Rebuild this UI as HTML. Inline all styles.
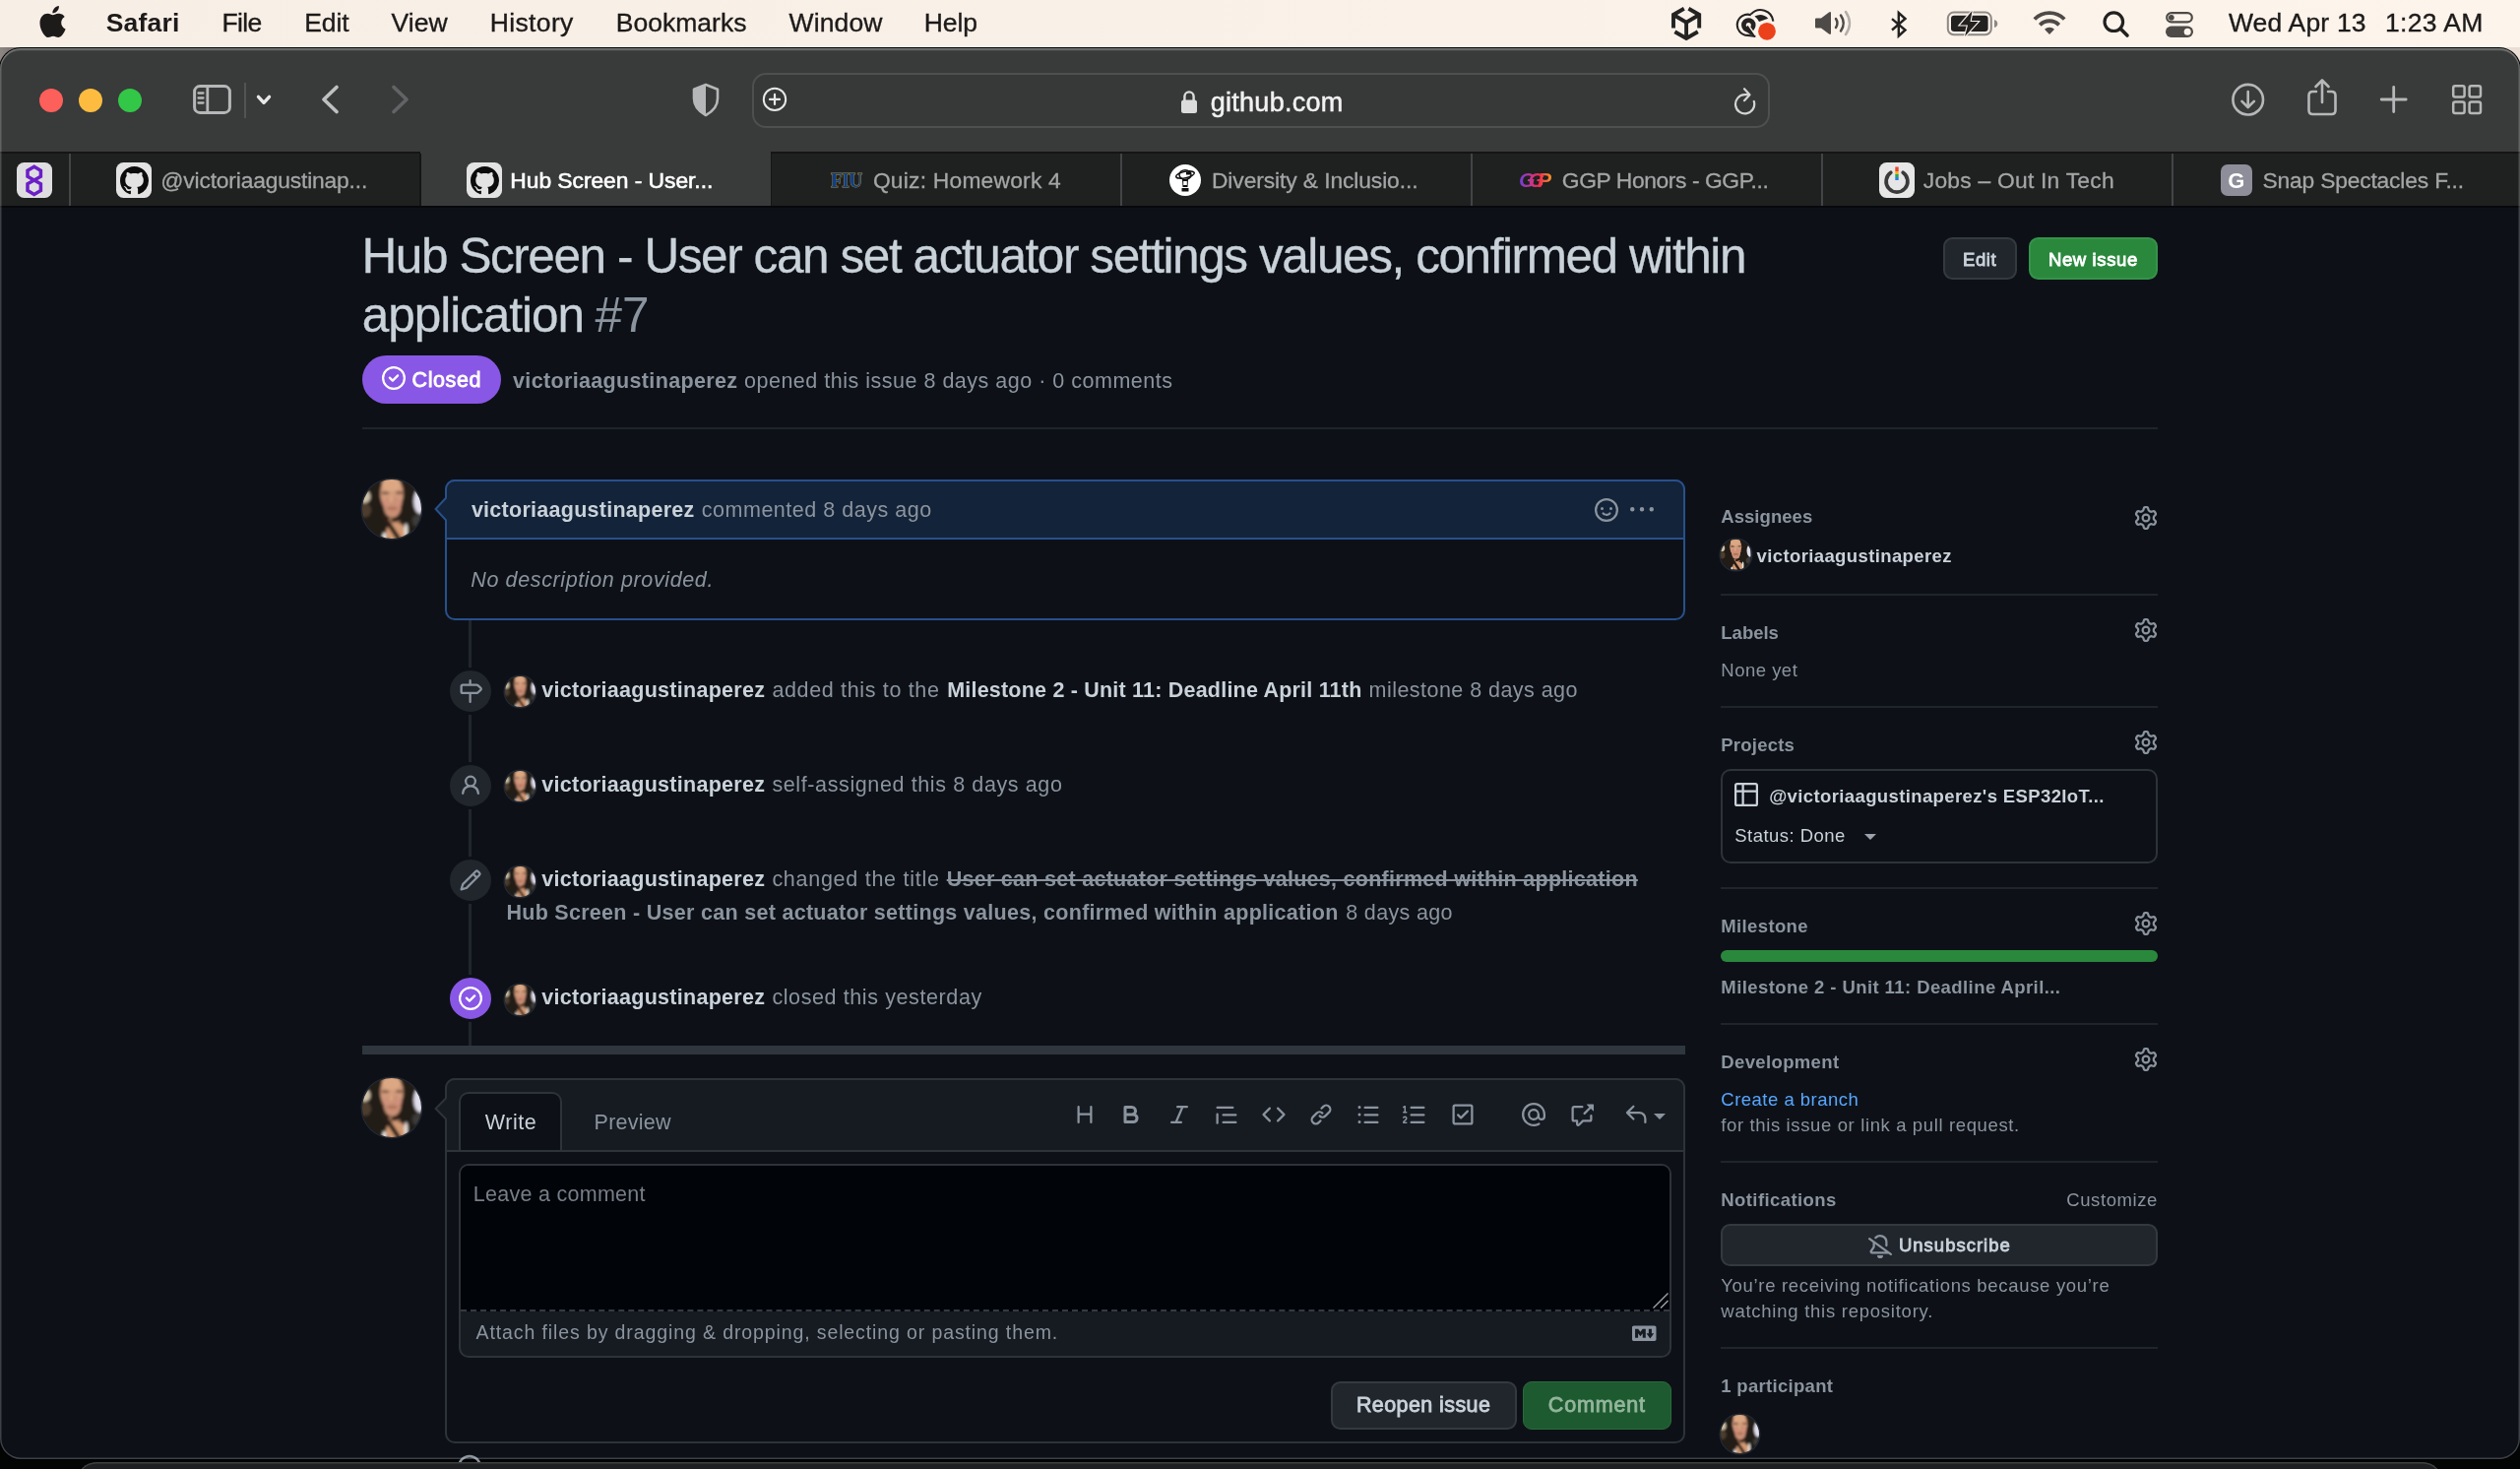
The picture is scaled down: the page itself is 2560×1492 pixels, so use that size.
<!DOCTYPE html>
<html lang="en"><head><meta charset="utf-8"><title>Hub Screen - User can set actuator settings values, confirmed within application #7</title>
<style>
html,body{margin:0;padding:0;background:#0d1117;}
body{width:2560px;height:1492px;overflow:hidden;font-family:"Liberation Sans",sans-serif;}
#root{will-change:transform;position:relative;width:2560px;height:1492px;overflow:hidden;background:#030404;}
.a{position:absolute;box-sizing:border-box;}
.t{position:absolute;white-space:pre;line-height:1;}
svg{position:absolute;overflow:visible;}

</style></head>
<body>
<div id="root">
<div class="a" style="left:0px;top:0px;width:2560px;height:48px;background:linear-gradient(90deg,#f7eee6 0%,#f9f0e8 45%,#fdf4ec 100%);"></div>
<div class="a" style="left:0px;top:48px;width:2560px;height:40px;background:linear-gradient(90deg,#8d8783 0px,#3a3a3a 60px,#3a3a3a 50%,#eaded5 50%);"></div>
<svg style="left:40px;top:6px" width="27" height="32" viewBox="0 0 814 1000"><path fill="#1d1b1a" d="M788.1 340.9c-5.800 4.500-108.200 62.200-108.200 190.500 0 148.400 130.300 200.900 134.200 202.200-.600 3.200-20.700 71.900-68.700 141.900-42.800 61.600-87.500 123.100-155.500 123.100s-85.500-39.500-164-39.500c-76.500 0-103.700 40.800-165.900 40.800s-105.600-57-155.500-127C46.700 790.700 0 663 0 541.800c0-194.400 126.400-297.500 250.800-297.500 66.100 0 121.200 43.400 162.700 43.400 39.500 0 101.100-46 176.300-46 28.500 0 130.900 2.600 198.300 99.200zm-234-181.500c31.100-36.900 53.100-88.100 53.100-139.300 0-7.100-.600-14.300-1.900-20.100-50.600 1.900-110.800 33.700-147.100 75.800-28.500 32.400-55.100 83.600-55.100 135.500 0 7.800 1.300 15.600 1.900 18.100 3.200.600 8.400 1.300 13.600 1.300 45.400 0 102.500-30.400 135.500-71.300z"/></svg>
<span class="t" style="left:107.7px;top:10.00px;font-size:26.5px;color:#1d1b1a;font-weight:700;letter-spacing:0.229px;">Safari</span>
<span class="t" style="left:225.5px;top:10.00px;font-size:26.5px;color:#1d1b1a;letter-spacing:-0.668px;-webkit-text-stroke:0.350px #1d1b1a;">File</span>
<span class="t" style="left:309.3px;top:10.00px;font-size:26.5px;color:#1d1b1a;letter-spacing:-0.157px;-webkit-text-stroke:0.350px #1d1b1a;">Edit</span>
<span class="t" style="left:397.5px;top:10.00px;font-size:26.5px;color:#1d1b1a;letter-spacing:0.044px;-webkit-text-stroke:0.350px #1d1b1a;">View</span>
<span class="t" style="left:497.8px;top:10.00px;font-size:26.5px;color:#1d1b1a;letter-spacing:0.341px;-webkit-text-stroke:0.350px #1d1b1a;">History</span>
<span class="t" style="left:625.8px;top:10.00px;font-size:26.5px;color:#1d1b1a;letter-spacing:0.019px;-webkit-text-stroke:0.350px #1d1b1a;">Bookmarks</span>
<span class="t" style="left:801.5px;top:10.00px;font-size:26.5px;color:#1d1b1a;letter-spacing:0.147px;-webkit-text-stroke:0.350px #1d1b1a;">Window</span>
<span class="t" style="left:938.7px;top:10.00px;font-size:26.5px;color:#1d1b1a;letter-spacing:-0.072px;-webkit-text-stroke:0.350px #1d1b1a;">Help</span>
<span class="t" style="left:2263.9px;top:10.00px;font-size:26.5px;color:#1d1b1a;letter-spacing:0.189px;-webkit-text-stroke:0.350px #1d1b1a;">Wed Apr 13</span>
<span class="t" style="left:2422.9px;top:10.00px;font-size:26.5px;color:#1d1b1a;letter-spacing:0.378px;-webkit-text-stroke:0.350px #1d1b1a;">1:23 AM</span>
<svg style="left:1697px;top:6px" width="33" height="37" viewBox="0 0 33 37">
<g fill="none" stroke="#242322" stroke-width="3.900" stroke-linejoin="miter" stroke-linecap="butt">
<path d="M13.800 2.800 L3 8.950 L3 22.600"/>
<path d="M18.400 2.800 L29.200 8.950 L29.200 22.600"/>
<path d="M4.400 26.200 L16.100 33 L27.800 26.200"/>
<path d="M3 8.950 L16.100 16.700 L29.200 8.950"/>
<path d="M16.100 16.700 L16.100 33"/>
</g></svg>
<svg style="left:1762px;top:7px" width="44" height="36" viewBox="0 0 44 36">
<g fill="none" stroke="#242322" stroke-width="2.100" stroke-linecap="butt" stroke-linejoin="round">
<path d="M16.900 8.300 A10.600 10.600 0 1 0 13.300 28.900 L21.200 29.900"/>
<path d="M16.850 7.360 A13 13 0 0 1 39.360 14.610"/>
</g>
<circle cx="14.300" cy="18.500" r="4.900" fill="none" stroke="#242322" stroke-width="4.700"/>
<path d="M9 22.800 L14.500 18.300 L21.800 30.500 L15.500 27.800 Z" fill="#242322"/>
<path d="M21.300 21.800 L25 19.500 L25 28 L22 28 Z" fill="#fcf3eb"/>
<path d="M13.600 17.600 L21.200 28.600" stroke="#fcf3eb" stroke-width="1.400" fill="none"/>
<path d="M20.400 9.600 Q28 5.600 34.300 11.800 L25 14.900 Q23 11.500 20.400 9.600 Z" fill="#242322"/>
<circle cx="33" cy="24.800" r="8.900" fill="#ec421b"/></svg>
<svg style="left:1843px;top:11px" width="40" height="26" viewBox="0 0 40 26">
<path d="M1 8.500 Q1 7.500 2 7.500 H7 L15 1.500 Q17 0.300 17 2.500 V22.500 Q17 24.700 15 23.500 L7 17.500 H2 Q1 17.500 1 16.500 Z" fill="#4d4a47"/>
<g fill="none" stroke-linecap="round" stroke-width="2.500">
<path d="M22 8 Q25 12.500 22 17" stroke="#4d4a47"/>
<path d="M27 4.500 Q32.500 12.500 27 20.500" stroke="#4d4a47"/>
<path d="M32 1 Q40 12.500 32 24" stroke="#b3aeaa"/>
</g></svg>
<svg style="left:1919px;top:11px" width="20" height="28" viewBox="0 0 20 28">
<path d="M3 8.200 L16.500 19.500 L9.800 25.500 V2 L16.500 8 L3 19.500" fill="none" stroke="#222120" stroke-width="2.400" stroke-linejoin="miter"/></svg>
<svg style="left:1977px;top:11px" width="54" height="26" viewBox="0 0 54 26">
<rect x="1.800" y="1.600" width="44" height="22.600" rx="6" fill="none" stroke="#8d8884" stroke-width="2"/>
<rect x="5" y="4.800" width="37.600" height="16.200" rx="3.200" fill="#222120"/>
<path d="M49 9 Q52.300 10 52.300 13 Q52.300 16 49 17 Z" fill="#8d8884"/>
<path d="M26.500 0 L14 14.500 H22 L19 26 L32.500 11 H24.500 Z" fill="#222120" stroke="#fcf3eb" stroke-width="2.200" paint-order="stroke"/></svg>
<svg style="left:2064px;top:9px" width="36" height="28" viewBox="0 0 36 28">
<g fill="none" stroke="#4d4a47" stroke-width="3.800" stroke-linecap="butt">
<path d="M2.800 10.500 A21.500 21.500 0 0 1 33.200 10.500"/>
<path d="M8.300 16.300 A13.700 13.700 0 0 1 27.700 16.300"/>
</g>
<path d="M18 26 L13 20.800 A7 7 0 0 1 23 20.800 Z" fill="#4d4a47"/></svg>
<svg style="left:2135px;top:10px" width="30" height="30" viewBox="0 0 30 30">
<circle cx="12.300" cy="12.200" r="9.300" fill="none" stroke="#222120" stroke-width="3.200"/>
<path d="M19 19 L26 26" stroke="#222120" stroke-width="3.600" stroke-linecap="round"/></svg>
<svg style="left:2199px;top:11px" width="30" height="28" viewBox="0 0 30 28">
<rect x="2.200" y="2.200" width="25.600" height="9.200" rx="4.600" fill="none" stroke="#4d4a47" stroke-width="2.200"/>
<circle cx="6.800" cy="6.800" r="2.900" fill="#4d4a47"/>
<rect x="1" y="15.500" width="28" height="11.400" rx="5.700" fill="#4d4a47"/>
<circle cx="23.200" cy="21.200" r="3.500" fill="#fcf3eb"/></svg>
<div class="a" style="left:0px;top:49px;width:2560px;height:1432.5px;background:#0d1117;border-radius:21px;box-shadow:0 0 0 1px #000;"></div>
<div class="a" style="left:0px;top:49px;width:2560px;height:106px;background:#393a3a;border-radius:21px 21px 0 0;"></div>
<div class="a" style="left:0px;top:154px;width:2560px;height:56px;background:#1f2020;border-top:2px solid #151516;border-bottom:1px solid #0a0a0b;"></div>
<div class="a" style="left:427px;top:154px;width:356px;height:56px;background:#393a3a;"></div>
<div class="a" style="left:70px;top:156px;width:2px;height:53px;background:#434445;"></div>
<div class="a" style="left:1138px;top:156px;width:2px;height:53px;background:#434445;"></div>
<div class="a" style="left:1494px;top:156px;width:2px;height:53px;background:#434445;"></div>
<div class="a" style="left:1850px;top:156px;width:2px;height:53px;background:#434445;"></div>
<div class="a" style="left:2206px;top:156px;width:2px;height:53px;background:#434445;"></div>
<div class="a" style="left:426px;top:156px;width:1.5px;height:53px;background:#151516;"></div>
<div class="a" style="left:782.5px;top:156px;width:1.5px;height:53px;background:#151516;"></div>
<div class="a" style="left:39.8px;top:89.8px;width:24.4px;height:24.4px;background:#fd5f5a;border-radius:12.2px;"></div>
<div class="a" style="left:79.8px;top:89.8px;width:24.4px;height:24.4px;background:#fdbc40;border-radius:12.2px;"></div>
<div class="a" style="left:119.8px;top:89.8px;width:24.4px;height:24.4px;background:#33c748;border-radius:12.2px;"></div>
<svg style="left:195px;top:85px" width="41" height="32" viewBox="0 0 41 32">
<rect x="2.600" y="2.600" width="35.800" height="26.800" rx="5.500" fill="none" stroke="#b6b7b8" stroke-width="3"/>
<path d="M15.800 2.500 V29.500" stroke="#b6b7b8" stroke-width="2.800"/>
<path d="M6.500 9.500 H11.500 M6.500 14.500 H11.500 M6.500 19.500 H11.500" stroke="#b6b7b8" stroke-width="2.300" stroke-linecap="round"/></svg>
<div class="a" style="left:248px;top:84px;width:1.5px;height:36px;background:#525355;"></div>
<svg style="left:259px;top:95px" width="18" height="14" viewBox="0 0 18 14"><path d="M3.500 3.300 L9 9.300 L14.500 3.300" fill="none" stroke="#e8e8e9" stroke-width="3.400" stroke-linecap="round" stroke-linejoin="round"/></svg>
<svg style="left:324px;top:85px" width="22" height="32" viewBox="0 0 22 32"><path d="M18 3.500 L5 16 L18 28.500" fill="none" stroke="#bfc0c1" stroke-width="3.700" stroke-linecap="round" stroke-linejoin="round"/></svg>
<svg style="left:396px;top:85px" width="22" height="32" viewBox="0 0 22 32"><path d="M4 3.500 L17 16 L4 28.500" fill="none" stroke="#626365" stroke-width="3.700" stroke-linecap="round" stroke-linejoin="round"/></svg>
<svg style="left:702px;top:84px" width="30" height="35" viewBox="0 0 30 35">
<path d="M15 2 L27 6.800 V16 C27 24.500 21.500 29.500 15 33 C8.500 29.500 3 24.500 3 16 V6.800 Z" fill="none" stroke="#b6b7b8" stroke-width="2.600" stroke-linejoin="round"/>
<path d="M15 2 L3 6.800 V16 C3 24.500 8.500 29.500 15 33 Z" fill="#b6b7b8"/></svg>
<div class="a" style="left:763.5px;top:74px;width:1034px;height:55.5px;background:#373838;border:2px solid #4e4f4f;border-radius:14px;"></div>
<svg style="left:773px;top:87px" width="28" height="28" viewBox="0 0 28 28"><circle cx="14" cy="13.900" r="11.200" fill="none" stroke="#e8e8e9" stroke-width="2"/><path d="M14 8.900 V18.900 M9 13.900 H19" stroke="#e8e8e9" stroke-width="2.200" stroke-linecap="round"/></svg>
<svg style="left:1199px;top:91px" width="18" height="25" viewBox="0 0 18 25"><rect x="1" y="10.500" width="16" height="13.500" rx="2.500" fill="#dcdcdd"/><path d="M4.400 11 V7 A4.600 4.600 0 0 1 13.600 7 V11" fill="none" stroke="#dcdcdd" stroke-width="2.400"/></svg>
<span class="t" style="left:1229.7px;top:91.00px;font-size:27px;color:#f2f2f3;letter-spacing:0.280px;-webkit-text-stroke:0.500px #f2f2f3;">github.com</span>
<svg style="left:1759px;top:86px" width="28" height="30" viewBox="0 0 28 30"><path d="M22.800 14 A9.600 9.600 0 1 1 13.200 7.200 H17" fill="none" stroke="#d4d4d5" stroke-width="2.200" stroke-linecap="round" transform="translate(0,3)"/><path d="M13 4 L18.500 10 L13 16" fill="none" stroke="#d4d4d5" stroke-width="2.200" stroke-linecap="round" stroke-linejoin="round" transform="translate(0,0.2)"/></svg>
<svg style="left:2265px;top:83px" width="37" height="37" viewBox="0 0 37 37"><circle cx="18.700" cy="18.200" r="15.300" fill="none" stroke="#b6b7b8" stroke-width="2.600"/><path d="M18.700 10 V25.500 M12.500 19.800 L18.700 26 L24.900 19.800" fill="none" stroke="#b6b7b8" stroke-width="2.600" stroke-linecap="round" stroke-linejoin="round"/></svg>
<svg style="left:2342px;top:78px" width="34" height="42" viewBox="0 0 34 42"><path d="M11 15 H7.500 Q3.500 15 3.500 19 V34 Q3.500 38 7.500 38 H26.500 Q30.500 38 30.500 34 V19 Q30.500 15 26.500 15 H23" fill="none" stroke="#b6b7b8" stroke-width="2.600" stroke-linecap="round"/><path d="M17 26 V4 M10.500 10 L17 3.500 L23.500 10" fill="none" stroke="#b6b7b8" stroke-width="2.600" stroke-linecap="round" stroke-linejoin="round"/></svg>
<svg style="left:2416px;top:85px" width="32" height="32" viewBox="0 0 32 32"><path d="M15.700 3.500 V28.500 M3.200 16 H28.200" stroke="#b6b7b8" stroke-width="2.800" stroke-linecap="round"/></svg>
<svg style="left:2489px;top:84px" width="34" height="34" viewBox="0 0 34 34"><g fill="none" stroke="#b6b7b8" stroke-width="2.500"><rect x="3.200" y="3.200" width="11.400" height="11.400" rx="2"/><rect x="19.600" y="3.200" width="11.400" height="11.400" rx="2"/><rect x="3.200" y="19.600" width="11.400" height="11.400" rx="2"/><rect x="19.600" y="19.600" width="11.400" height="11.400" rx="2"/></g></svg>
<div class="a" style="left:17px;top:165px;width:36px;height:36px;background:#dedee0;border-radius:7.5px;"></div>
<svg style="left:17px;top:165px" width="36" height="36" viewBox="0 0 36 36"><g fill="none" stroke="#6c1fc6" stroke-width="3.500" stroke-linejoin="miter"><path d="M17.700 4.300 L24.400 8.200 V14.200 L17.700 18 L11 14.200 V8.200 Z"/><path d="M17.700 18 L24.400 21.800 V28.600 L17.700 32.500 L11 28.600 V21.800 Z"/></g></svg>
<div class="a" style="left:118px;top:165px;width:36px;height:36px;background:#e3e3e4;border-radius:7.5px;"></div>
<svg style="left:121.5px;top:168.500px" width="29" height="29" viewBox="0 0 16 16"><path fill="#0c0c0d" fill-rule="evenodd" d="M8 0C3.580 0 0 3.580 0 8c0 3.540 2.290 6.530 5.470 7.590.400.070.550-.170.550-.380 0-.190-.010-.820-.010-1.490-2.010.370-2.530-.490-2.690-.940-.090-.230-.480-.940-.820-1.130-.280-.150-.680-.520-.010-.530.630-.010 1.080.580 1.230.820.720 1.210 1.870.870 2.330.660.070-.520.280-.870.510-1.070-1.780-.200-3.640-.890-3.640-3.950 0-.870.310-1.590.820-2.150-.080-.200-.360-1.020.080-2.120 0 0 .670-.210 2.200.820.640-.180 1.320-.270 2-.270.680 0 1.360.090 2 .270 1.530-1.040 2.200-.820 2.200-.820.440 1.100.160 1.920.080 2.120.510.560.820 1.270.820 2.150 0 3.070-1.870 3.750-3.650 3.950.290.250.540.730.540 1.480 0 1.070-.010 1.930-.010 2.200 0 .210.150.460.550.380A8.013 8.013 0 0016 8c0-4.420-3.580-8-8-8z"/></svg>
<span class="t" style="left:163.3px;top:172.00px;font-size:22.8px;color:#a4a5a6;letter-spacing:-0.162px;-webkit-text-stroke:0.300px #a4a5a6;">@victoriaagustinap...</span>
<div class="a" style="left:474px;top:165px;width:36px;height:36px;background:#e3e3e4;border-radius:7.5px;"></div>
<svg style="left:477.5px;top:168.500px" width="29" height="29" viewBox="0 0 16 16"><path fill="#0c0c0d" fill-rule="evenodd" d="M8 0C3.580 0 0 3.580 0 8c0 3.540 2.290 6.530 5.470 7.590.400.070.550-.170.550-.380 0-.190-.010-.820-.010-1.490-2.010.370-2.530-.490-2.690-.940-.090-.230-.480-.940-.820-1.130-.280-.150-.680-.520-.010-.530.630-.010 1.080.580 1.230.820.720 1.210 1.870.870 2.330.660.070-.520.280-.870.510-1.070-1.780-.200-3.640-.890-3.640-3.950 0-.870.310-1.590.820-2.150-.080-.200-.360-1.020.080-2.120 0 0 .670-.210 2.200.820.640-.180 1.320-.270 2-.270.680 0 1.360.090 2 .270 1.530-1.040 2.200-.820 2.200-.820.440 1.100.160 1.920.080 2.120.510.560.820 1.270.820 2.150 0 3.070-1.870 3.750-3.650 3.950.290.250.540.730.540 1.480 0 1.070-.010 1.930-.010 2.200 0 .210.150.460.550.380A8.013 8.013 0 0016 8c0-4.420-3.580-8-8-8z"/></svg>
<span class="t" style="left:518.3px;top:172.00px;font-size:22.8px;color:#ffffff;letter-spacing:-0.028px;-webkit-text-stroke:0.600px #ffffff;">Hub Screen - User...</span>
<span class="t" style="left:843.500px;top:172.500px;font-family:'Liberation Serif',serif;font-weight:700;font-size:21.500px;letter-spacing:-0.600px;color:#0b3f8f;-webkit-text-stroke:0.900px #b08d2c;paint-order:stroke fill;transform:scaleX(0.9);transform-origin:0 0;">FIU</span>
<span class="t" style="left:886.9px;top:172.00px;font-size:22.8px;color:#a4a5a6;letter-spacing:0.227px;-webkit-text-stroke:0.300px #a4a5a6;">Quiz: Homework 4</span>
<div class="a" style="left:1188px;top:166.8px;width:32px;height:32px;background:#ffffff;border-radius:16px;"></div>
<svg style="left:1188px;top:166.800px" width="32" height="32" viewBox="0 0 32 32"><g fill="none" stroke="#111" stroke-width="1.500"><ellipse cx="16" cy="10.500" rx="9.500" ry="3.200" transform="rotate(-12 16 10.500)"/><ellipse cx="16" cy="10.500" rx="6" ry="4.800"/></g><path d="M13 15 H19 L18.500 23 H13.500 Z M12.500 24 H19.500 V27.500 H12.500 Z" fill="#111"/><path d="M17 7.500 h4.500 v3 h-4.500z" fill="#111"/><path d="M14.200 17 h3.600 v4 h-3.600z" fill="#fff"/></svg>
<span class="t" style="left:1231px;top:172.00px;font-size:22.8px;color:#a4a5a6;letter-spacing:-0.094px;-webkit-text-stroke:0.300px #a4a5a6;">Diversity &amp; Inclusio...</span>
<span class="t" style="left:1543px;top:171.500px;font-weight:700;font-style:italic;font-size:21px;letter-spacing:-6.800px;padding-right:9px;background:linear-gradient(90deg,#6a3fd8 0%,#c2378f 35%,#ee2f4f 60%,#f5a623 100%);-webkit-background-clip:text;background-clip:text;color:transparent;">GGP</span>
<span class="t" style="left:1586.8px;top:172.00px;font-size:22.8px;color:#a4a5a6;letter-spacing:-0.393px;-webkit-text-stroke:0.300px #a4a5a6;">GGP Honors - GGP...</span>
<div class="a" style="left:1909px;top:165px;width:36px;height:36px;background:#e6e6e7;border-radius:7.5px;"></div>
<svg style="left:1909px;top:165px" width="36" height="36" viewBox="0 0 36 36"><path d="M11.800 10.200 A10.900 10.900 0 1 0 24.200 10.200" fill="none" stroke="#3a3a3b" stroke-width="3.700" stroke-linecap="round"/><rect x="16.300" y="4.500" width="3.400" height="4.500" fill="#e8452c"/><rect x="16.300" y="9" width="3.400" height="3" fill="#f2b01e"/><rect x="16.300" y="12" width="3.400" height="3" fill="#2aa84a"/><rect x="16.300" y="15" width="3.400" height="3" fill="#2a7de1"/></svg>
<span class="t" style="left:1953.8px;top:172.00px;font-size:22.8px;color:#a4a5a6;letter-spacing:0.243px;-webkit-text-stroke:0.300px #a4a5a6;">Jobs – Out In Tech</span>
<div class="a" style="left:2256px;top:167px;width:32px;height:32px;background:#8e8e9a;border-radius:7px;"></div>
<span class="t" style="left:2263.2px;top:173.00px;font-size:22px;color:#ffffff;font-weight:700;">G</span>
<span class="t" style="left:2298.4px;top:172.00px;font-size:22.8px;color:#a4a5a6;letter-spacing:-0.165px;-webkit-text-stroke:0.300px #a4a5a6;">Snap Spectacles F...</span>
<div class="a" style="left:1.5px;top:210px;width:2557px;height:1270.5px;background:#0d1117;border-radius:0 0 21px 21px;"></div>
<div class="a" style="left:0px;top:209px;width:2560px;height:2px;background:#06080b;"></div>
<svg width="0" height="0" style="left:0;top:0"><defs>
<filter id="avb" x="-20%" y="-20%" width="140%" height="140%"><feGaussianBlur stdDeviation="2.600"/></filter>
<symbol id="av" viewBox="0 0 100 100"><rect width="100" height="100" fill="#211b18"/><g filter="url(#avb)">
<rect x="-10" y="-10" width="120" height="120" fill="#211b18"/>
<ellipse cx="4" cy="29" rx="10" ry="11" fill="#cdbfa6"/>
<ellipse cx="4" cy="52" rx="11" ry="12" fill="#4e3d2d"/>
<ellipse cx="98" cy="37" rx="11" ry="21" fill="#e2dfec"/>
<ellipse cx="96" cy="70" rx="12" ry="11" fill="#3a3a38"/>
<ellipse cx="50" cy="24" rx="19.500" ry="28" fill="#d09a7b"/>
<ellipse cx="49" cy="8" rx="16" ry="12" fill="#dca883"/>
<ellipse cx="51" cy="47" rx="14.500" ry="18" fill="#c98f74"/>
<ellipse cx="40" cy="40" rx="6" ry="6" fill="#d0907c"/><ellipse cx="61" cy="40" rx="6" ry="6" fill="#d0907c"/>
<ellipse cx="39" cy="23" rx="6.500" ry="2.200" fill="#6e4c3a"/><ellipse cx="63" cy="22.500" rx="6.500" ry="2.200" fill="#6e4c3a"/>
<ellipse cx="49" cy="33" rx="3" ry="7" fill="#dba682"/>
<ellipse cx="50.500" cy="49" rx="9" ry="2" fill="#a2634f"/>
<ellipse cx="53" cy="70" rx="11" ry="6" fill="#a8775a"/>
<ellipse cx="57" cy="90" rx="17" ry="17" fill="#d29a73"/>
<path d="M33 58 Q46 76 64 104" stroke="#2a1c15" stroke-width="8" fill="none"/>
<path d="M70 60 Q60 70 50 68" stroke="#211b18" stroke-width="7" fill="none"/>
<ellipse cx="37.500" cy="98" rx="3.500" ry="8" fill="#eeeae4"/>
<ellipse cx="74" cy="86" rx="3" ry="12" fill="#e6e2dc"/>
</g></symbol></defs></svg>
<span class="t" style="left:367.5px;top:235.00px;font-size:49.5px;color:#c9d1d9;letter-spacing:-1.421px;-webkit-text-stroke:0.300px #c9d1d9;">Hub Screen - User can set actuator settings values, confirmed within</span>
<span class="t" style="left:367.7px;top:295.00px;font-size:49.5px;color:#c9d1d9;letter-spacing:-1.037px;-webkit-text-stroke:0.300px #c9d1d9;">application</span>
<span class="t" style="left:604.5px;top:295.00px;font-size:49.5px;color:#8b949e;letter-spacing:-0.062px;">#7</span>
<div class="a" style="left:1974px;top:241px;width:75px;height:43px;background:#21262d;border:2px solid #343940;border-radius:9.5px;"></div>
<span class="t" style="left:1994px;top:255.00px;font-size:18.5px;color:#c9d1d9;letter-spacing:0.570px;-webkit-text-stroke:0.85px #c9d1d9;">Edit</span>
<div class="a" style="left:2061px;top:241px;width:131px;height:43px;background:#2a883d;border:2px solid #35934a;border-radius:9.5px;"></div>
<span class="t" style="left:2081px;top:255.00px;font-size:18.5px;color:#ffffff;letter-spacing:0.607px;-webkit-text-stroke:0.85px #ffffff;">New issue</span>
<div class="a" style="left:368px;top:361px;width:141px;height:49px;background:#8957e5;border-radius:24.5px;"></div>
<svg style="left:388.00px;top:372.00px" width="24" height="24" viewBox="0 0 16 16"><path fill="#ffffff" fill-rule="evenodd" d="M11.28 6.78a.75.75 0 00-1.06-1.06L7.25 8.69 5.78 7.22a.75.75 0 00-1.06 1.06l2 2a.75.75 0 001.06 0l3.5-3.5z M16 8A8 8 0 110 8a8 8 0 0116 0zm-1.5 0a6.5 6.5 0 10-13 0 6.5 6.5 0 0013 0z"/></svg>
<span class="t" style="left:418.5px;top:376.00px;font-size:21.5px;color:#ffffff;letter-spacing:0.613px;-webkit-text-stroke:0.85px #ffffff;">Closed</span>
<span class="t" style="left:521px;top:377.00px;font-size:21.5px;color:#8b949e;font-weight:700;letter-spacing:0.348px;">victoriaagustinaperez</span>
<span class="t" style="left:756px;top:377.00px;font-size:21.5px;color:#8b949e;letter-spacing:0.507px;">opened this issue 8 days ago · 0 comments</span>
<div class="a" style="left:368px;top:434px;width:1824px;height:2px;background:#1f242b;"></div>
<svg style="left:368px;top:487px;border-radius:50%;overflow:hidden;box-shadow:0 0 0 1.5px #232a35;" width="60" height="60"><use href="#av" width="60" height="60"/></svg>
<div class="a" style="left:476px;top:629px;width:3px;height:433px;background:#21262d;"></div>
<div class="a" style="left:452px;top:487px;width:1260px;height:143px;background:#0d1117;border:2px solid #28508c;border-radius:10px;"></div>
<div class="a" style="left:452px;top:487px;width:1260px;height:61px;background:#132339;border:2px solid #28508c;border-radius:10px 10px 0 0;"></div>
<svg style="left:440px;top:504px" width="14" height="26" viewBox="0 0 14 26"><path d="M14 1.500 L3 13 L14 24.500 Z" fill="#132339"/><path d="M13.200 1.500 L2.600 13 L13.200 24.500" fill="none" stroke="#28508c" stroke-width="2"/></svg>
<span class="t" style="left:478.9px;top:508.00px;font-size:21.5px;color:#c9d1d9;font-weight:700;letter-spacing:0.268px;">victoriaagustinaperez</span>
<span class="t" style="left:712.8px;top:508.00px;font-size:21.5px;color:#8b949e;letter-spacing:0.516px;">commented 8 days ago</span>
<svg style="left:1619.70px;top:505.80px" width="24" height="24" viewBox="0 0 16 16"><path fill="#8b949e" fill-rule="evenodd" d="M8 0a8 8 0 100 16A8 8 0 008 0zM1.500 8a6.500 6.500 0 1113 0 6.500 6.500 0 01-13 0zm3.820 1.636a.75.75 0 011.038.175l.007.009c.103.118.22.222.35.31.264.178.683.37 1.285.37.602 0 1.02-.192 1.285-.371.13-.088.247-.192.35-.31l.007-.008a.75.75 0 111.222.87l-.614-.431c.614.43.614.431.613.431v.001l-.001.002-.002.003-.005.007-.014.019a1.984 1.984 0 01-.184.213c-.16.166-.338.316-.53.445-.63.418-1.370.638-2.127.629-.946 0-1.652-.308-2.126-.63a3.320 3.320 0 01-.715-.657l-.014-.02-.005-.006-.002-.003v-.002h-.001l.613-.432-.614.43a.75.75 0 01.183-1.044h.001zM12 7a1 1 0 11-2 0 1 1 0 012 0zM5 8a1 1 0 100-2 1 1 0 000 2z"/></svg>
<svg style="left:1656.20px;top:505.50px" width="24" height="24" viewBox="0 0 16 16"><path fill="#8b949e" fill-rule="evenodd" d="M8 9a1.5 1.5 0 100-3 1.5 1.5 0 000 3zM1.5 9a1.5 1.5 0 100-3 1.5 1.5 0 000 3zm13 0a1.5 1.5 0 100-3 1.5 1.5 0 000 3z"/></svg>
<span class="t" style="left:478.3px;top:579.00px;font-size:21.5px;color:#8b949e;font-style:italic;letter-spacing:0.619px;">No description provided.</span>
<div class="a" style="left:453.5px;top:677.7px;width:48px;height:48px;background:#21262d;border:3px solid #0d1117;border-radius:24px;"></div>
<svg style="left:465.50px;top:689.70px" width="24" height="24" viewBox="0 0 16 16"><path fill="#8b949e" fill-rule="evenodd" d="M7.75 0a.75.75 0 01.75.75V3h3.634c.414 0 .814.147 1.13.414l2.07 1.75a1.75 1.75 0 010 2.672l-2.07 1.75a1.75 1.75 0 01-1.13.414H8.5v5.25a.75.75 0 11-1.5 0V10H2.75A1.75 1.75 0 011 8.25v-3.5C1 3.784 1.784 3 2.75 3H7V.75A.75.75 0 017.75 0zm0 8.5h4.384a.25.25 0 00.161-.06l2.07-1.75a.25.25 0 000-.38l-2.07-1.75a.25.25 0 00-.161-.06H2.75a.25.25 0 00-.25.25v3.5c0 .138.112.25.25.25h5z"/></svg>
<svg style="left:513.2px;top:687.3000000000001px;border-radius:50%;overflow:hidden;box-shadow:0 0 0 1.5px #232a35;" width="31" height="31"><use href="#av" width="31" height="31"/></svg>
<span class="t" style="left:550.3px;top:691.00px;font-size:21.5px;color:#c9d1d9;font-weight:700;letter-spacing:0.278px;">victoriaagustinaperez</span>
<span class="t" style="left:784.4px;top:691.00px;font-size:21.5px;color:#8b949e;letter-spacing:0.657px;">added this to the</span>
<span class="t" style="left:962.2px;top:691.00px;font-size:21.5px;color:#c9d1d9;font-weight:700;letter-spacing:0.208px;">Milestone 2 - Unit 11: Deadline April 11th</span>
<span class="t" style="left:1390.6px;top:691.00px;font-size:21.5px;color:#8b949e;letter-spacing:0.459px;">milestone 8 days ago</span>
<div class="a" style="left:453.5px;top:773.8px;width:48px;height:48px;background:#21262d;border:3px solid #0d1117;border-radius:24px;"></div>
<svg style="left:465.50px;top:785.80px" width="24" height="24" viewBox="0 0 16 16"><path fill="#8b949e" fill-rule="evenodd" d="M10.5 5a2.5 2.5 0 11-5 0 2.5 2.5 0 015 0zm.061 3.073a4 4 0 10-5.123 0 6.004 6.004 0 00-3.431 5.142.75.75 0 001.498.07 4.5 4.5 0 018.99 0 .75.75 0 101.498-.07 6.005 6.005 0 00-3.432-5.142z"/></svg>
<svg style="left:513.2px;top:783.4px;border-radius:50%;overflow:hidden;box-shadow:0 0 0 1.5px #232a35;" width="31" height="31"><use href="#av" width="31" height="31"/></svg>
<span class="t" style="left:550.3px;top:787.00px;font-size:21.5px;color:#c9d1d9;font-weight:700;letter-spacing:0.278px;">victoriaagustinaperez</span>
<span class="t" style="left:784.4px;top:787.00px;font-size:21.5px;color:#8b949e;letter-spacing:0.615px;">self-assigned this 8 days ago</span>
<div class="a" style="left:453.5px;top:869.9px;width:48px;height:48px;background:#21262d;border:3px solid #0d1117;border-radius:24px;"></div>
<svg style="left:465.50px;top:881.90px" width="24" height="24" viewBox="0 0 16 16"><path fill="#8b949e" fill-rule="evenodd" d="M11.013 1.427a1.75 1.75 0 012.474 0l1.086 1.086a1.75 1.75 0 010 2.474l-8.61 8.61c-.21.21-.47.364-.756.445l-3.251.93a.75.75 0 01-.927-.928l.929-3.25a1.75 1.75 0 01.445-.758l8.61-8.61zm1.414 1.06a.25.25 0 00-.354 0L10.811 3.75l1.439 1.44 1.263-1.263a.25.25 0 000-.354l-1.086-1.086zM11.189 6.25L9.75 4.81l-6.286 6.287a.25.25 0 00-.064.108l-.558 1.953 1.953-.558a.249.249 0 00.108-.064l6.286-6.286z"/></svg>
<svg style="left:513.2px;top:879.5px;border-radius:50%;overflow:hidden;box-shadow:0 0 0 1.5px #232a35;" width="31" height="31"><use href="#av" width="31" height="31"/></svg>
<span class="t" style="left:550.3px;top:883.00px;font-size:21.5px;color:#c9d1d9;font-weight:700;letter-spacing:0.278px;">victoriaagustinaperez</span>
<span class="t" style="left:784.4px;top:883.00px;font-size:21.5px;color:#8b949e;letter-spacing:0.731px;">changed the title</span>
<span class="t" style="left:961.7px;top:883.00px;font-size:21.5px;color:#8b949e;font-weight:700;text-decoration:line-through;letter-spacing:0.280px;">User can set actuator settings values, confirmed within application</span>
<span class="t" style="left:514.4px;top:917.00px;font-size:21.5px;color:#8b949e;font-weight:700;letter-spacing:0.291px;">Hub Screen - User can set actuator settings values, confirmed within application</span>
<span class="t" style="left:1367.2px;top:917.00px;font-size:21.5px;color:#8b949e;letter-spacing:0.355px;">8 days ago</span>
<div class="a" style="left:453.5px;top:989.9px;width:48px;height:48px;background:#8957e5;border:3px solid #0d1117;border-radius:24px;"></div>
<svg style="left:465.50px;top:1001.90px" width="24" height="24" viewBox="0 0 16 16"><path fill="#ffffff" fill-rule="evenodd" d="M11.28 6.78a.75.75 0 00-1.06-1.06L7.25 8.69 5.78 7.22a.75.75 0 00-1.06 1.06l2 2a.75.75 0 001.06 0l3.5-3.5z M16 8A8 8 0 110 8a8 8 0 0116 0zm-1.5 0a6.5 6.5 0 10-13 0 6.5 6.5 0 0013 0z"/></svg>
<svg style="left:513.2px;top:999.5px;border-radius:50%;overflow:hidden;box-shadow:0 0 0 1.5px #232a35;" width="31" height="31"><use href="#av" width="31" height="31"/></svg>
<span class="t" style="left:550.3px;top:1003.00px;font-size:21.5px;color:#c9d1d9;font-weight:700;letter-spacing:0.278px;">victoriaagustinaperez</span>
<span class="t" style="left:784.4px;top:1003.00px;font-size:21.5px;color:#8b949e;letter-spacing:0.602px;">closed this yesterday</span>
<div class="a" style="left:368px;top:1062px;width:1344px;height:9px;background:#30363d;"></div>
<svg style="left:368px;top:1095px;border-radius:50%;overflow:hidden;box-shadow:0 0 0 1.5px #232a35;" width="60" height="60"><use href="#av" width="60" height="60"/></svg>
<div class="a" style="left:452px;top:1095px;width:1260px;height:370.5px;background:#0d1117;border:2px solid #2d3339;border-radius:10px;"></div>
<div class="a" style="left:452px;top:1095px;width:1260px;height:75px;background:#161b22;border:2px solid #2d3339;border-radius:10px 10px 0 0;"></div>
<svg style="left:440px;top:1113px" width="14" height="26" viewBox="0 0 14 26"><path d="M14 2.200 L3 13 L14 23.800 Z" fill="#161b22"/><path d="M13.200 2.200 L2.600 13 L13.200 23.800" fill="none" stroke="#2d3339" stroke-width="2"/></svg>
<div class="a" style="left:466px;top:1109px;width:105px;height:61px;background:#0d1117;border:2px solid #2d3339;border-bottom:0;border-radius:10px 10px 0 0;"></div>
<div class="a" style="left:454px;top:1168px;width:1256px;height:2px;background:#2d3339;"></div>
<span class="t" style="left:492.8px;top:1130.00px;font-size:21.5px;color:#c9d1d9;letter-spacing:0.530px;">Write</span>
<span class="t" style="left:603.6px;top:1130.00px;font-size:21.5px;color:#8b949e;letter-spacing:0.255px;">Preview</span>
<svg style="left:1089.70px;top:1120.00px" width="24" height="24" viewBox="0 0 16 16"><path fill="#8b949e" fill-rule="evenodd" d="M3.750 2a.75.75 0 01.75.75V7h7V2.750a.75.75 0 011.500 0v10.500a.75.75 0 01-1.500 0V8.500h-7v4.750a.75.75 0 01-1.500 0V2.750A.75.75 0 013.750 2z"/></svg>
<svg style="left:1137.40px;top:1120.00px" width="24" height="24" viewBox="0 0 16 16"><path fill="#8b949e" fill-rule="evenodd" d="M4 2a1 1 0 00-1 1v10a1 1 0 001 1h5.500a3.500 3.500 0 001.852-6.470A3.500 3.500 0 008.500 2H4zm4.500 5a1.500 1.500 0 100-3H5v3h3.500zM5 9v3h4.500a1.500 1.500 0 000-3H5z"/></svg>
<svg style="left:1185.60px;top:1120.00px" width="24" height="24" viewBox="0 0 16 16"><path fill="#8b949e" fill-rule="evenodd" d="M6 2.750A.75.75 0 016.750 2h6.500a.75.75 0 010 1.500h-2.505l-3.858 9H9.250a.75.75 0 010 1.500h-6.500a.75.75 0 010-1.500h2.505l3.858-9H6.750A.75.75 0 016 2.750z"/></svg>
<svg style="left:1233.60px;top:1120.00px" width="24" height="24" viewBox="0 0 16 16"><path fill="#8b949e" fill-rule="evenodd" d="M1.750 2.500a.75.75 0 000 1.500h10.500a.75.75 0 000-1.500H1.750zm4 5a.75.75 0 000 1.500h8.500a.75.75 0 000-1.500h-8.500zm0 5a.75.75 0 000 1.500h8.500a.75.75 0 000-1.500h-8.500zM2.500 7.750a.75.75 0 00-1.500 0v6a.75.75 0 001.500 0v-6z"/></svg>
<svg style="left:1281.80px;top:1120.00px" width="24" height="24" viewBox="0 0 16 16"><path fill="#8b949e" fill-rule="evenodd" d="M4.720 3.220a.75.75 0 011.060 1.060L2.060 8l3.720 3.720a.75.75 0 11-1.060 1.060L.470 8.530a.75.75 0 010-1.060l4.250-4.250zm6.560 0a.75.75 0 10-1.060 1.060L13.940 8l-3.720 3.720a.75.75 0 101.060 1.060l4.250-4.250a.75.75 0 000-1.060l-4.250-4.250z"/></svg>
<svg style="left:1329.70px;top:1120.00px" width="24" height="24" viewBox="0 0 16 16"><path fill="#8b949e" fill-rule="evenodd" d="M7.775 3.275a.75.75 0 001.060 1.060l1.250-1.250a2 2 0 112.830 2.830l-2.500 2.500a2 2 0 01-2.830 0 .75.75 0 00-1.060 1.060 3.500 3.500 0 004.950 0l2.500-2.500a3.500 3.500 0 00-4.950-4.950l-1.250 1.250zm-4.690 9.640a2 2 0 010-2.830l2.500-2.500a2 2 0 012.830 0 .75.75 0 001.060-1.060 3.500 3.500 0 00-4.950 0l-2.500 2.500a3.500 3.500 0 004.950 4.950l1.250-1.250a.75.75 0 00-1.060-1.060l-1.250 1.250a2 2 0 01-2.830 0z"/></svg>
<svg style="left:1377.70px;top:1120.00px" width="24" height="24" viewBox="0 0 16 16"><path fill="#8b949e" fill-rule="evenodd" d="M2 4a1 1 0 100-2 1 1 0 000 2zm3.750-1.500a.75.75 0 000 1.500h8.500a.75.75 0 000-1.500h-8.500zm0 5a.75.75 0 000 1.500h8.500a.75.75 0 000-1.500h-8.500zm0 5a.75.75 0 000 1.500h8.500a.75.75 0 000-1.500h-8.500zM3 8a1 1 0 11-2 0 1 1 0 012 0zm-1 6a1 1 0 100-2 1 1 0 000 2z"/></svg>
<svg style="left:1425.10px;top:1120.00px" width="24" height="24" viewBox="0 0 16 16"><path fill="#8b949e" fill-rule="evenodd" d="M2.003 2.500a.5.5 0 00-.723-.447l-1.003.5a.5.5 0 00.446.895l.28-.14V6H.500a.5.5 0 000 1h2.006a.5.5 0 100-1h-.503V2.500zM5 3.250a.75.75 0 01.75-.75h8.500a.75.75 0 010 1.500h-8.500A.75.75 0 015 3.250zm0 5a.75.75 0 01.75-.75h8.500a.75.75 0 010 1.500h-8.500A.75.75 0 015 8.250zm0 5a.75.75 0 01.75-.75h8.500a.75.75 0 010 1.500h-8.500a.75.75 0 01-.75-.75zM.924 10.320l.003-.004a.851.851 0 01.144-.153A.66.66 0 011.500 10c.195 0 .306.068.374.146a.57.57 0 01.128.376c0 .453-.269.682-.8 1.078l-.035.025C.692 11.980 0 12.495 0 13.500a.5.5 0 00.5.5h2.003a.5.5 0 000-1H1.146c.132-.197.351-.372.654-.597l.047-.035c.47-.35 1.156-.858 1.156-1.845 0-.365-.118-.744-.377-1.038-.268-.303-.658-.484-1.126-.484-.48 0-.84.202-1.068.392a1.858 1.858 0 00-.348.384l-.007.011-.002.004-.001.002-.001.001a.5.5 0 00.851.525z"/></svg>
<svg style="left:1473.90px;top:1120.00px" width="24" height="24" viewBox="0 0 16 16"><path fill="#8b949e" fill-rule="evenodd" d="M2.500 2.750a.25.25 0 01.25-.25h10.500a.25.25 0 01.25.25v10.500a.25.25 0 01-.25.25H2.750a.25.25 0 01-.25-.25V2.750zM2.750 1A1.750 1.750 0 001 2.750v10.500c0 .966.784 1.750 1.750 1.750h10.500A1.750 1.750 0 0015 13.250V2.750A1.750 1.750 0 0013.250 1H2.750zm9.030 5.280a.75.75 0 00-1.060-1.060L6.750 9.190 5.280 7.720a.75.75 0 00-1.060 1.060l2 2a.75.75 0 001.060 0l4.500-4.500z"/></svg>
<svg style="left:1546.00px;top:1120.00px" width="24" height="24" viewBox="0 0 16 16"><path fill="#8b949e" fill-rule="evenodd" d="M4.750 2.370a6.500 6.500 0 006.500 11.260.75.75 0 01.75 1.298 8 8 0 113.994-7.273.754.754 0 01.006.095v1.500a2.750 2.750 0 01-5.072 1.475A4 4 0 1112 8v1.250a1.250 1.250 0 002.500 0V8a6.500 6.500 0 00-9.750-5.630zM10.500 8a2.500 2.500 0 10-5 0 2.500 2.500 0 005 0z"/></svg>
<svg style="left:1594.50px;top:1120.00px" width="24" height="24" viewBox="0 0 16 16"><path fill="#8b949e" fill-rule="evenodd" d="M16 1.250v4.146a.25.25 0 01-.427.177L14.030 4.030l-3.750 3.750a.75.75 0 11-1.060-1.060l3.750-3.750-1.543-1.543A.25.25 0 0111.604 1h4.146a.25.25 0 01.25.25zM2.750 3.500a.25.25 0 00-.25.25v7.500c0 .138.112.25.25.25h2a.75.75 0 01.75.75v2.190l2.720-2.720a.75.75 0 01.53-.22h4.500a.25.25 0 00.25-.25v-2.500a.75.75 0 111.500 0v2.500A1.750 1.750 0 0113.250 13H9.060l-2.573 2.573A1.457 1.457 0 014 14.543V13H2.750A1.750 1.750 0 011 11.250v-7.500C1 2.784 1.784 2 2.750 2h5.500a.75.75 0 010 1.500h-5.500z"/></svg>
<svg style="left:1650.00px;top:1120.00px" width="24" height="24" viewBox="0 0 16 16"><path fill="#8b949e" fill-rule="evenodd" d="M6.780 1.970a.75.75 0 010 1.060L3.810 6h6.440A4.750 4.750 0 0115 10.750v2.500a.75.75 0 01-1.500 0v-2.500a3.250 3.250 0 00-3.250-3.250H3.810l2.970 2.970a.75.75 0 11-1.060 1.060L1.470 7.280a.75.75 0 010-1.060l4.250-4.250a.75.75 0 011.060 0z"/></svg>
<svg style="left:1680px;top:1130.500px" width="12" height="6" viewBox="0 0 12 6"><path d="M0 0 H12 L6 6 Z" fill="#8b949e"/></svg>
<div class="a" style="left:466px;top:1182px;width:1232px;height:196.5px;background:#161b22;border:2px solid #2d3339;border-radius:10px;"></div>
<div class="a" style="left:468px;top:1184px;width:1228px;height:148px;background:#010409;border-radius:8px 8px 0 0;border-bottom:2px dashed #343a42;"></div>
<span class="t" style="left:480.8px;top:1203.00px;font-size:21.5px;color:#767e88;letter-spacing:0.271px;">Leave a comment</span>
<svg style="left:1676px;top:1310px" width="20" height="20" viewBox="0 0 20 20"><path d="M18.500 3.500 L3.500 18.500 M18.500 11 L11 18.500" stroke="#a0a6ad" stroke-width="1.400"/></svg>
<span class="t" style="left:483.6px;top:1344.00px;font-size:19.5px;color:#8b949e;letter-spacing:0.889px;">Attach files by dragging &amp; dropping, selecting or pasting them.</span>
<svg style="left:1657.75px;top:1341.75px" width="24.5" height="24.5" viewBox="0 0 16 16"><path fill="#8b949e" fill-rule="evenodd" d="M14.850 3H1.150C.52 3 0 3.520 0 4.150v7.690C0 12.480.52 13 1.150 13h13.690c.64 0 1.150-.52 1.150-1.150v-7.700C16 3.520 15.480 3 14.850 3zM9 11H7V8L5.500 9.920 4 8v3H2V5h2l1.500 2L7 5h2v6zm2.990.5L9.500 8H11V5h2v3h1.500l-2.510 3.500z"/></svg>
<div class="a" style="left:1352px;top:1403px;width:189px;height:48.5px;background:#21262d;border:2px solid #343940;border-radius:9.5px;"></div>
<span class="t" style="left:1377.9px;top:1417.00px;font-size:21.5px;color:#c9d1d9;letter-spacing:0.411px;-webkit-text-stroke:0.85px #c9d1d9;">Reopen issue</span>
<div class="a" style="left:1547px;top:1403px;width:151px;height:48.5px;background:#1d5a30;border:1.5px solid #2a6a3c;border-radius:9px;"></div>
<span class="t" style="left:1572.8px;top:1417.00px;font-size:21.5px;color:#93b59c;letter-spacing:0.833px;-webkit-text-stroke:0.85px #93b59c;">Comment</span>
<svg style="left:464px;top:1478px" width="26" height="12" viewBox="0 0 26 12"><path d="M2 12 A11 11 0 0 1 24 12" fill="none" stroke="#8b949e" stroke-width="2.400"/></svg>
<span class="t" style="left:1748.3px;top:516.00px;font-size:18.5px;color:#8b949e;font-weight:700;letter-spacing:0.044px;">Assignees</span>
<svg style="left:2168.00px;top:514.00px" width="24" height="24" viewBox="0 0 16 16"><path fill="#8b949e" fill-rule="evenodd" d="M7.429 1.525a6.593 6.593 0 011.142 0c.036.003.108.036.137.146l.289 1.105c.147.56.55.967.997 1.189.174.086.341.183.501.29.417.278.97.423 1.53.27l1.102-.303c.11-.03.175.016.195.046.219.31.41.641.573.989.014.031.022.11-.059.19l-.815.806c-.411.406-.562.957-.53 1.456a4.588 4.588 0 010 .582c-.032.499.119 1.05.53 1.456l.815.806c.08.08.073.159.059.19a6.494 6.494 0 01-.573.99c-.02.029-.086.074-.195.045l-1.103-.303c-.559-.153-1.112-.008-1.529.27-.16.107-.327.204-.5.29-.449.222-.851.628-.998 1.189l-.289 1.105c-.029.11-.101.143-.137.146a6.613 6.613 0 01-1.142 0c-.036-.003-.108-.037-.137-.146l-.289-1.105c-.147-.56-.55-.967-.997-1.189a4.502 4.502 0 01-.501-.29c-.417-.278-.97-.423-1.53-.27l-1.102.303c-.11.03-.175-.016-.195-.046a6.492 6.492 0 01-.573-.989c-.014-.031-.022-.11.059-.19l.815-.806c.411-.406.562-.957.53-1.456a4.587 4.587 0 010-.582c.032-.499-.119-1.05-.53-1.456l-.815-.806c-.08-.08-.073-.159-.059-.19a6.44 6.44 0 01.573-.99c.02-.029.086-.075.195-.045l1.103.303c.559.153 1.112.008 1.529-.27.16-.107.327-.204.5-.29.449-.222.851-.628.998-1.189l.289-1.105c.029-.11.101-.143.137-.146zM8 0c-.236 0-.47.01-.701.03-.743.065-1.29.615-1.458 1.261l-.29 1.106c-.017.066-.078.158-.211.224a5.994 5.994 0 00-.668.386c-.123.082-.233.09-.3.071L3.27 2.776c-.644-.177-1.392.02-1.82.63a7.977 7.977 0 00-.704 1.217c-.315.675-.111 1.422.363 1.891l.815.806c.05.048.098.147.088.294a6.084 6.084 0 000 .772c.01.147-.038.246-.088.294l-.815.806c-.474.469-.678 1.216-.363 1.891.2.428.436.835.704 1.218.428.609 1.176.806 1.82.63l1.103-.303c.066-.019.176-.011.299.071.213.143.436.272.668.386.133.066.194.158.212.224l.289 1.106c.169.646.715 1.196 1.458 1.26a8.094 8.094 0 001.402 0c.743-.064 1.29-.614 1.458-1.26l.29-1.106c.017-.066.078-.158.211-.224a5.980 5.980 0 00.668-.386c.123-.082.233-.09.3-.071l1.102.302c.644.177 1.392-.02 1.82-.63.268-.382.505-.789.704-1.217.315-.675.111-1.422-.364-1.891l-.814-.806c-.05-.048-.098-.147-.088-.294a6.100 6.100 0 000-.772c-.01-.147.039-.246.088-.294l.814-.806c.475-.469.679-1.216.364-1.891a7.992 7.992 0 00-.704-1.218c-.428-.609-1.176-.806-1.820-.63l-1.103.303c-.066.019-.176.011-.299-.071a5.991 5.991 0 00-.668-.386c-.133-.066-.194-.158-.212-.224L10.160 1.290C9.990.645 9.444.095 8.701.031A8.094 8.094 0 008 0zm1.500 8a1.500 1.500 0 11-3 0 1.500 1.500 0 013 0zM11 8a3 3 0 11-6 0 3 3 0 016 0z"/></svg>
<svg style="left:1748px;top:548px;border-radius:50%;overflow:hidden;box-shadow:0 0 0 1.5px #232a35;" width="30.5" height="30.5"><use href="#av" width="30.5" height="30.5"/></svg>
<span class="t" style="left:1784.6px;top:556.00px;font-size:18.5px;color:#c9d1d9;font-weight:700;letter-spacing:0.380px;">victoriaagustinaperez</span>
<div class="a" style="left:1748px;top:603px;width:444px;height:2px;background:#20252c;"></div>
<span class="t" style="left:1748.3px;top:634.00px;font-size:18.5px;color:#8b949e;font-weight:700;letter-spacing:-0.002px;">Labels</span>
<svg style="left:2168.00px;top:628.00px" width="24" height="24" viewBox="0 0 16 16"><path fill="#8b949e" fill-rule="evenodd" d="M7.429 1.525a6.593 6.593 0 011.142 0c.036.003.108.036.137.146l.289 1.105c.147.56.55.967.997 1.189.174.086.341.183.501.29.417.278.97.423 1.53.27l1.102-.303c.11-.03.175.016.195.046.219.31.41.641.573.989.014.031.022.11-.059.19l-.815.806c-.411.406-.562.957-.53 1.456a4.588 4.588 0 010 .582c-.032.499.119 1.05.53 1.456l.815.806c.08.08.073.159.059.19a6.494 6.494 0 01-.573.99c-.02.029-.086.074-.195.045l-1.103-.303c-.559-.153-1.112-.008-1.529.27-.16.107-.327.204-.5.29-.449.222-.851.628-.998 1.189l-.289 1.105c-.029.11-.101.143-.137.146a6.613 6.613 0 01-1.142 0c-.036-.003-.108-.037-.137-.146l-.289-1.105c-.147-.56-.55-.967-.997-1.189a4.502 4.502 0 01-.501-.29c-.417-.278-.97-.423-1.53-.27l-1.102.303c-.11.03-.175-.016-.195-.046a6.492 6.492 0 01-.573-.989c-.014-.031-.022-.11.059-.19l.815-.806c.411-.406.562-.957.53-1.456a4.587 4.587 0 010-.582c.032-.499-.119-1.05-.53-1.456l-.815-.806c-.08-.08-.073-.159-.059-.19a6.44 6.44 0 01.573-.99c.02-.029.086-.075.195-.045l1.103.303c.559.153 1.112.008 1.529-.27.16-.107.327-.204.5-.29.449-.222.851-.628.998-1.189l.289-1.105c.029-.11.101-.143.137-.146zM8 0c-.236 0-.47.01-.701.03-.743.065-1.29.615-1.458 1.261l-.29 1.106c-.017.066-.078.158-.211.224a5.994 5.994 0 00-.668.386c-.123.082-.233.09-.3.071L3.27 2.776c-.644-.177-1.392.02-1.82.63a7.977 7.977 0 00-.704 1.217c-.315.675-.111 1.422.363 1.891l.815.806c.05.048.098.147.088.294a6.084 6.084 0 000 .772c.01.147-.038.246-.088.294l-.815.806c-.474.469-.678 1.216-.363 1.891.2.428.436.835.704 1.218.428.609 1.176.806 1.82.63l1.103-.303c.066-.019.176-.011.299.071.213.143.436.272.668.386.133.066.194.158.212.224l.289 1.106c.169.646.715 1.196 1.458 1.26a8.094 8.094 0 001.402 0c.743-.064 1.29-.614 1.458-1.26l.29-1.106c.017-.066.078-.158.211-.224a5.980 5.980 0 00.668-.386c.123-.082.233-.09.3-.071l1.102.302c.644.177 1.392-.02 1.82-.63.268-.382.505-.789.704-1.217.315-.675.111-1.422-.364-1.891l-.814-.806c-.05-.048-.098-.147-.088-.294a6.100 6.100 0 000-.772c-.01-.147.039-.246.088-.294l.814-.806c.475-.469.679-1.216.364-1.891a7.992 7.992 0 00-.704-1.218c-.428-.609-1.176-.806-1.820-.63l-1.103.303c-.066.019-.176.011-.299-.071a5.991 5.991 0 00-.668-.386c-.133-.066-.194-.158-.212-.224L10.160 1.290C9.990.645 9.444.095 8.701.031A8.094 8.094 0 008 0zm1.500 8a1.500 1.500 0 11-3 0 1.500 1.500 0 013 0zM11 8a3 3 0 11-6 0 3 3 0 016 0z"/></svg>
<span class="t" style="left:1748.3px;top:672.00px;font-size:18.5px;color:#8b949e;letter-spacing:0.493px;">None yet</span>
<div class="a" style="left:1748px;top:717px;width:444px;height:2px;background:#20252c;"></div>
<span class="t" style="left:1748.3px;top:748.00px;font-size:18.5px;color:#8b949e;font-weight:700;letter-spacing:0.226px;">Projects</span>
<svg style="left:2168.00px;top:742.00px" width="24" height="24" viewBox="0 0 16 16"><path fill="#8b949e" fill-rule="evenodd" d="M7.429 1.525a6.593 6.593 0 011.142 0c.036.003.108.036.137.146l.289 1.105c.147.56.55.967.997 1.189.174.086.341.183.501.29.417.278.97.423 1.53.27l1.102-.303c.11-.03.175.016.195.046.219.31.41.641.573.989.014.031.022.11-.059.19l-.815.806c-.411.406-.562.957-.53 1.456a4.588 4.588 0 010 .582c-.032.499.119 1.05.53 1.456l.815.806c.08.08.073.159.059.19a6.494 6.494 0 01-.573.99c-.02.029-.086.074-.195.045l-1.103-.303c-.559-.153-1.112-.008-1.529.27-.16.107-.327.204-.5.29-.449.222-.851.628-.998 1.189l-.289 1.105c-.029.11-.101.143-.137.146a6.613 6.613 0 01-1.142 0c-.036-.003-.108-.037-.137-.146l-.289-1.105c-.147-.56-.55-.967-.997-1.189a4.502 4.502 0 01-.501-.29c-.417-.278-.97-.423-1.53-.27l-1.102.303c-.11.03-.175-.016-.195-.046a6.492 6.492 0 01-.573-.989c-.014-.031-.022-.11.059-.19l.815-.806c.411-.406.562-.957.53-1.456a4.587 4.587 0 010-.582c.032-.499-.119-1.05-.53-1.456l-.815-.806c-.08-.08-.073-.159-.059-.19a6.44 6.44 0 01.573-.99c.02-.029.086-.075.195-.045l1.103.303c.559.153 1.112.008 1.529-.27.16-.107.327-.204.5-.29.449-.222.851-.628.998-1.189l.289-1.105c.029-.11.101-.143.137-.146zM8 0c-.236 0-.47.01-.701.03-.743.065-1.29.615-1.458 1.261l-.29 1.106c-.017.066-.078.158-.211.224a5.994 5.994 0 00-.668.386c-.123.082-.233.09-.3.071L3.27 2.776c-.644-.177-1.392.02-1.82.63a7.977 7.977 0 00-.704 1.217c-.315.675-.111 1.422.363 1.891l.815.806c.05.048.098.147.088.294a6.084 6.084 0 000 .772c.01.147-.038.246-.088.294l-.815.806c-.474.469-.678 1.216-.363 1.891.2.428.436.835.704 1.218.428.609 1.176.806 1.82.63l1.103-.303c.066-.019.176-.011.299.071.213.143.436.272.668.386.133.066.194.158.212.224l.289 1.106c.169.646.715 1.196 1.458 1.26a8.094 8.094 0 001.402 0c.743-.064 1.29-.614 1.458-1.26l.29-1.106c.017-.066.078-.158.211-.224a5.980 5.980 0 00.668-.386c.123-.082.233-.09.3-.071l1.102.302c.644.177 1.392-.02 1.82-.63.268-.382.505-.789.704-1.217.315-.675.111-1.422-.364-1.891l-.814-.806c-.05-.048-.098-.147-.088-.294a6.100 6.100 0 000-.772c-.01-.147.039-.246.088-.294l.814-.806c.475-.469.679-1.216.364-1.891a7.992 7.992 0 00-.704-1.218c-.428-.609-1.176-.806-1.820-.63l-1.103.303c-.066.019-.176.011-.299-.071a5.991 5.991 0 00-.668-.386c-.133-.066-.194-.158-.212-.224L10.160 1.290C9.990.645 9.444.095 8.701.031A8.094 8.094 0 008 0zm1.500 8a1.500 1.500 0 11-3 0 1.500 1.500 0 013 0zM11 8a3 3 0 11-6 0 3 3 0 016 0z"/></svg>
<div class="a" style="left:1748px;top:781px;width:444px;height:96px;background:#0d1117;border:2px solid #2d3339;border-radius:10px;"></div>
<svg style="left:1762.20px;top:794.50px" width="24" height="24" viewBox="0 0 16 16"><path fill="#c9d1d9" fill-rule="evenodd" d="M0 1.75C0 .784.784 0 1.75 0h12.500C15.216 0 16 .784 16 1.75v12.500A1.75 1.75 0 0114.250 16H1.750A1.750 1.750 0 010 14.250V1.750zM1.500 6.500v7.750c0 .138.112.25.25.25H5v-8H1.500zM5 5H1.500V1.750a.25.25 0 01.25-.25H5V5zm1.500 1.500v8h7.750a.25.25 0 00.25-.25V6.500h-8zm8-1.500h-8V1.500h7.750a.25.25 0 01.25.25V5z"/></svg>
<span class="t" style="left:1797.2px;top:800.00px;font-size:18.5px;color:#c9d1d9;font-weight:700;letter-spacing:0.383px;">@victoriaagustinaperez&#x27;s ESP32IoT...</span>
<span class="t" style="left:1762.3px;top:840.00px;font-size:18.5px;color:#c9d1d9;letter-spacing:0.468px;">Status: Done</span>
<svg style="left:1894.400px;top:846.500px" width="12" height="6" viewBox="0 0 12 6"><path d="M0 0 H12 L6 6 Z" fill="#9aa2ab"/></svg>
<div class="a" style="left:1748px;top:901px;width:444px;height:2px;background:#20252c;"></div>
<span class="t" style="left:1748.3px;top:932.00px;font-size:18.5px;color:#8b949e;font-weight:700;letter-spacing:0.371px;">Milestone</span>
<svg style="left:2168.00px;top:926.00px" width="24" height="24" viewBox="0 0 16 16"><path fill="#8b949e" fill-rule="evenodd" d="M7.429 1.525a6.593 6.593 0 011.142 0c.036.003.108.036.137.146l.289 1.105c.147.56.55.967.997 1.189.174.086.341.183.501.29.417.278.97.423 1.53.27l1.102-.303c.11-.03.175.016.195.046.219.31.41.641.573.989.014.031.022.11-.059.19l-.815.806c-.411.406-.562.957-.53 1.456a4.588 4.588 0 010 .582c-.032.499.119 1.05.53 1.456l.815.806c.08.08.073.159.059.19a6.494 6.494 0 01-.573.99c-.02.029-.086.074-.195.045l-1.103-.303c-.559-.153-1.112-.008-1.529.27-.16.107-.327.204-.5.29-.449.222-.851.628-.998 1.189l-.289 1.105c-.029.11-.101.143-.137.146a6.613 6.613 0 01-1.142 0c-.036-.003-.108-.037-.137-.146l-.289-1.105c-.147-.56-.55-.967-.997-1.189a4.502 4.502 0 01-.501-.29c-.417-.278-.97-.423-1.53-.27l-1.102.303c-.11.03-.175-.016-.195-.046a6.492 6.492 0 01-.573-.989c-.014-.031-.022-.11.059-.19l.815-.806c.411-.406.562-.957.53-1.456a4.587 4.587 0 010-.582c.032-.499-.119-1.05-.53-1.456l-.815-.806c-.08-.08-.073-.159-.059-.19a6.44 6.44 0 01.573-.99c.02-.029.086-.075.195-.045l1.103.303c.559.153 1.112.008 1.529-.27.16-.107.327-.204.5-.29.449-.222.851-.628.998-1.189l.289-1.105c.029-.11.101-.143.137-.146zM8 0c-.236 0-.47.01-.701.03-.743.065-1.29.615-1.458 1.261l-.29 1.106c-.017.066-.078.158-.211.224a5.994 5.994 0 00-.668.386c-.123.082-.233.09-.3.071L3.27 2.776c-.644-.177-1.392.02-1.82.63a7.977 7.977 0 00-.704 1.217c-.315.675-.111 1.422.363 1.891l.815.806c.05.048.098.147.088.294a6.084 6.084 0 000 .772c.01.147-.038.246-.088.294l-.815.806c-.474.469-.678 1.216-.363 1.891.2.428.436.835.704 1.218.428.609 1.176.806 1.82.63l1.103-.303c.066-.019.176-.011.299.071.213.143.436.272.668.386.133.066.194.158.212.224l.289 1.106c.169.646.715 1.196 1.458 1.26a8.094 8.094 0 001.402 0c.743-.064 1.29-.614 1.458-1.26l.29-1.106c.017-.066.078-.158.211-.224a5.980 5.980 0 00.668-.386c.123-.082.233-.09.3-.071l1.102.302c.644.177 1.392-.02 1.82-.63.268-.382.505-.789.704-1.217.315-.675.111-1.422-.364-1.891l-.814-.806c-.05-.048-.098-.147-.088-.294a6.100 6.100 0 000-.772c-.01-.147.039-.246.088-.294l.814-.806c.475-.469.679-1.216.364-1.891a7.992 7.992 0 00-.704-1.218c-.428-.609-1.176-.806-1.820-.63l-1.103.303c-.066.019-.176.011-.299-.071a5.991 5.991 0 00-.668-.386c-.133-.066-.194-.158-.212-.224L10.160 1.290C9.990.645 9.444.095 8.701.031A8.094 8.094 0 008 0zm1.500 8a1.500 1.500 0 11-3 0 1.500 1.500 0 013 0zM11 8a3 3 0 11-6 0 3 3 0 016 0z"/></svg>
<div class="a" style="left:1748px;top:965px;width:444px;height:12px;background:#2a883d;border-radius:6px;"></div>
<span class="t" style="left:1748.3px;top:994.00px;font-size:18.5px;color:#8b949e;font-weight:700;letter-spacing:0.421px;">Milestone 2 - Unit 11: Deadline April...</span>
<div class="a" style="left:1748px;top:1039px;width:444px;height:2px;background:#20252c;"></div>
<span class="t" style="left:1748.3px;top:1070.00px;font-size:18.5px;color:#8b949e;font-weight:700;letter-spacing:0.363px;">Development</span>
<svg style="left:2168.00px;top:1064.20px" width="24" height="24" viewBox="0 0 16 16"><path fill="#8b949e" fill-rule="evenodd" d="M7.429 1.525a6.593 6.593 0 011.142 0c.036.003.108.036.137.146l.289 1.105c.147.56.55.967.997 1.189.174.086.341.183.501.29.417.278.97.423 1.53.27l1.102-.303c.11-.03.175.016.195.046.219.31.41.641.573.989.014.031.022.11-.059.19l-.815.806c-.411.406-.562.957-.53 1.456a4.588 4.588 0 010 .582c-.032.499.119 1.05.53 1.456l.815.806c.08.08.073.159.059.19a6.494 6.494 0 01-.573.99c-.02.029-.086.074-.195.045l-1.103-.303c-.559-.153-1.112-.008-1.529.27-.16.107-.327.204-.5.29-.449.222-.851.628-.998 1.189l-.289 1.105c-.029.11-.101.143-.137.146a6.613 6.613 0 01-1.142 0c-.036-.003-.108-.037-.137-.146l-.289-1.105c-.147-.56-.55-.967-.997-1.189a4.502 4.502 0 01-.501-.29c-.417-.278-.97-.423-1.53-.27l-1.102.303c-.11.03-.175-.016-.195-.046a6.492 6.492 0 01-.573-.989c-.014-.031-.022-.11.059-.19l.815-.806c.411-.406.562-.957.53-1.456a4.587 4.587 0 010-.582c.032-.499-.119-1.05-.53-1.456l-.815-.806c-.08-.08-.073-.159-.059-.19a6.44 6.44 0 01.573-.99c.02-.029.086-.075.195-.045l1.103.303c.559.153 1.112.008 1.529-.27.16-.107.327-.204.5-.29.449-.222.851-.628.998-1.189l.289-1.105c.029-.11.101-.143.137-.146zM8 0c-.236 0-.47.01-.701.03-.743.065-1.29.615-1.458 1.261l-.29 1.106c-.017.066-.078.158-.211.224a5.994 5.994 0 00-.668.386c-.123.082-.233.09-.3.071L3.27 2.776c-.644-.177-1.392.02-1.82.63a7.977 7.977 0 00-.704 1.217c-.315.675-.111 1.422.363 1.891l.815.806c.05.048.098.147.088.294a6.084 6.084 0 000 .772c.01.147-.038.246-.088.294l-.815.806c-.474.469-.678 1.216-.363 1.891.2.428.436.835.704 1.218.428.609 1.176.806 1.82.63l1.103-.303c.066-.019.176-.011.299.071.213.143.436.272.668.386.133.066.194.158.212.224l.289 1.106c.169.646.715 1.196 1.458 1.26a8.094 8.094 0 001.402 0c.743-.064 1.29-.614 1.458-1.26l.29-1.106c.017-.066.078-.158.211-.224a5.980 5.980 0 00.668-.386c.123-.082.233-.09.3-.071l1.102.302c.644.177 1.392-.02 1.82-.63.268-.382.505-.789.704-1.217.315-.675.111-1.422-.364-1.891l-.814-.806c-.05-.048-.098-.147-.088-.294a6.100 6.100 0 000-.772c-.01-.147.039-.246.088-.294l.814-.806c.475-.469.679-1.216.364-1.891a7.992 7.992 0 00-.704-1.218c-.428-.609-1.176-.806-1.820-.63l-1.103.303c-.066.019-.176.011-.299-.071a5.991 5.991 0 00-.668-.386c-.133-.066-.194-.158-.212-.224L10.160 1.290C9.990.645 9.444.095 8.701.031A8.094 8.094 0 008 0zm1.500 8a1.500 1.500 0 11-3 0 1.500 1.500 0 013 0zM11 8a3 3 0 11-6 0 3 3 0 016 0z"/></svg>
<span class="t" style="left:1748.3px;top:1108.00px;font-size:18.5px;color:#58a6ff;letter-spacing:0.488px;">Create a branch</span>
<span class="t" style="left:1748.3px;top:1134.00px;font-size:18.5px;color:#8b949e;letter-spacing:0.627px;">for this issue or link a pull request.</span>
<div class="a" style="left:1748px;top:1179px;width:444px;height:2px;background:#20252c;"></div>
<span class="t" style="left:1748.3px;top:1210.00px;font-size:18.5px;color:#8b949e;font-weight:700;letter-spacing:0.414px;">Notifications</span>
<span class="t" style="left:2099.3px;top:1210.00px;font-size:18.5px;color:#8b949e;letter-spacing:0.576px;">Customize</span>
<div class="a" style="left:1748px;top:1243px;width:444px;height:43px;background:#21262d;border:2px solid #343940;border-radius:9.5px;"></div>
<svg style="left:1898.00px;top:1254.00px" width="24" height="24" viewBox="0 0 16 16"><path fill="#8b949e" fill-rule="evenodd" d="M8 1.500c-.997 0-1.895.416-2.534 1.086A.75.75 0 014.380 1.550 5 5 0 0113 5v2.373a.75.75 0 01-1.500 0V5A3.500 3.500 0 008 1.500zM4.182 4.310L1.190 2.143a.75.75 0 10-.88 1.214L3 5.305v2.642a.25.25 0 01-.042.139L1.255 10.640A1.518 1.518 0 002.518 13h11.108l1.184.857a.75.75 0 10.88-1.214l-1.375-.996a1.196 1.196 0 00-.013-.01L4.198 4.321a.733.733 0 00-.016-.011zm7.373 7.190L4.500 6.391v1.556c0 .346-.102.683-.294.970l-1.703 2.556a.018.018 0 00-.003.01.015.015 0 00.005.012.017.017 0 00.006.004l.007.001h9.037zM8 16a2 2 0 001.985-1.750c.017-.137-.097-.25-.235-.25h-3.500c-.138 0-.252.113-.235.25A2 2 0 008 16z"/></svg>
<span class="t" style="left:1929px;top:1256.00px;font-size:18.5px;color:#c9d1d9;letter-spacing:0.987px;-webkit-text-stroke:0.85px #c9d1d9;">Unsubscribe</span>
<span class="t" style="left:1748.3px;top:1297.00px;font-size:18.5px;color:#8b949e;letter-spacing:0.682px;">You’re receiving notifications because you’re</span>
<span class="t" style="left:1748.3px;top:1323.00px;font-size:18.5px;color:#8b949e;letter-spacing:0.747px;">watching this repository.</span>
<div class="a" style="left:1748px;top:1368px;width:444px;height:2px;background:#20252c;"></div>
<span class="t" style="left:1748.3px;top:1399.00px;font-size:18.5px;color:#8b949e;font-weight:700;letter-spacing:0.308px;">1 participant</span>
<svg style="left:1748px;top:1437px;border-radius:50%;overflow:hidden;box-shadow:0 0 0 1.5px #232a35;" width="39" height="39"><use href="#av" width="39" height="39"/></svg>
<div class="a" style="left:78px;top:1484.5px;width:2403px;height:40px;background:#1e1f20;border-radius:26px;box-shadow:inset 0 1.500px 0 #3f4043;"></div>
<div class="a" style="left:0px;top:49px;width:2560px;height:1432.5px;border-radius:21px;box-shadow:inset 0 0 0 1.5px rgba(255,255,255,0.2), inset 0 2.5px 0 rgba(255,255,255,0.13);pointer-events:none;"></div>
</div>
</body></html>
